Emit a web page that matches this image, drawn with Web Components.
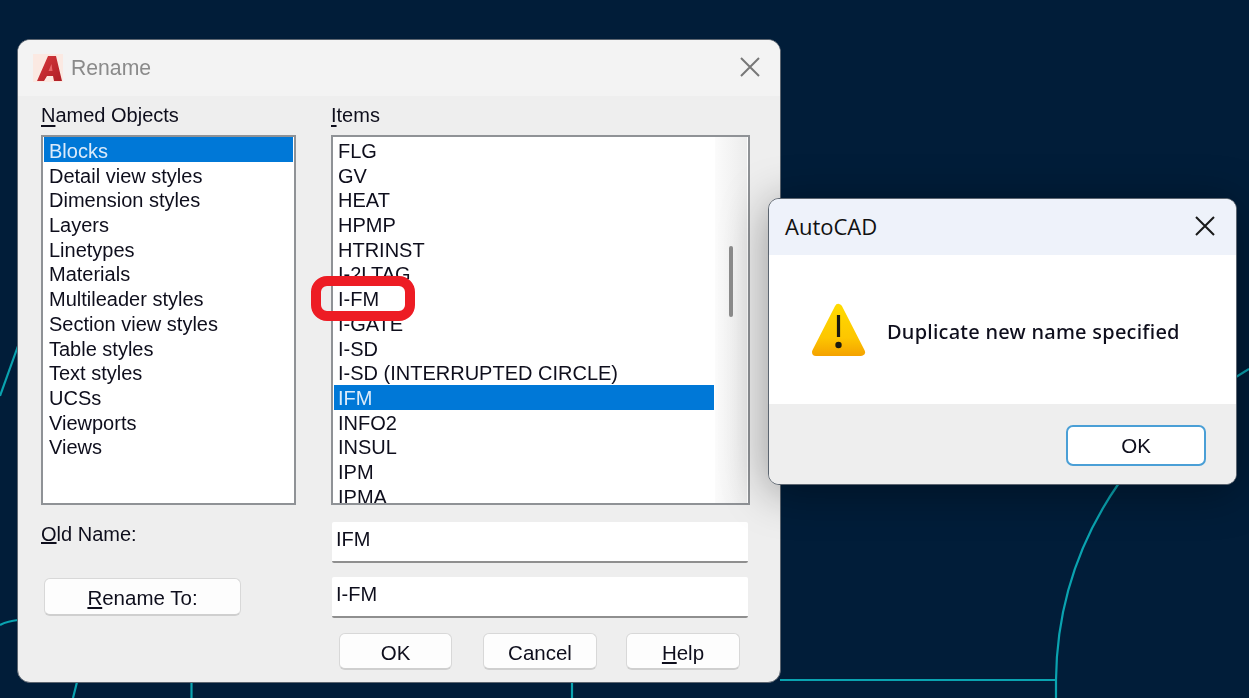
<!DOCTYPE html>
<html>
<head>
<meta charset="utf-8">
<title>Rename</title>
<style>
    html, body { margin: 0; height: 100%; background: #011d39; overflow: hidden; }
</style>
</head>
<body>
<cad-desktop>
    <rename-dialog></rename-dialog>
    <alert-dialog></alert-dialog>
</cad-desktop>

<script>
class CadDesktop extends HTMLElement {
    constructor() {
        super();
        this.attachShadow({mode: 'open'});
        this.shadowRoot.innerHTML = `
            <style>
                :host { display: block; position: relative; width: 1249px; height: 698px; overflow: hidden; background: #011d39; }
                svg { position: absolute; left: 0; top: 0; }
                path { fill: none; stroke: #0aa3b0; stroke-width: 2.200; }
            </style>
            <svg width="1249" height="698" viewBox="0 0 1249 698">
                <path d="M0 396 L18 346"/>
                <path d="M0 625 Q8 621 18 620"/>
                <path d="M77 682 L73 698"/>
                <path d="M191.500 682 V698"/>
                <path d="M572 682 V698"/>
                <path d="M780 680 H1056"/>
                <path d="M1119 483 Q1057 572 1056 680 V698"/>
                <path d="M1236 377 L1249 369"/>
            </svg>
            <slot></slot>
        `;
    }
}

class CloseIcon extends HTMLElement {
    constructor() {
        super();
        this.attachShadow({mode: 'open'});
        const color = this.getAttribute('color') || '#222';
        const width = this.getAttribute('stroke') || '2';
        this.shadowRoot.innerHTML = `
            <style>
                :host { display: block; width: 20px; height: 20px; }
                svg { display: block; }
            </style>
            <svg width="20" height="20" viewBox="0 0 20 20">
                <path d="M1 1 L19 19 M19 1 L1 19" fill="none" stroke="${color}" stroke-width="${width}"/>
            </svg>
        `;
    }
}

class WinButton extends HTMLElement {
    constructor() {
        super();
        this.attachShadow({mode: 'open'});
        this.shadowRoot.innerHTML = `
            <style>
                :host {
                    display: flex;
                    align-items: center;
                    justify-content: center;
                    box-sizing: border-box;
                    padding-top: 3px;
                    background: #fdfdfd;
                    border: 1px solid #d8d8d8;
                    border-bottom: 2px solid #cfcfcf;
                    border-radius: 6px;
                    color: #0e0e1c;
                    font: 20.500px "Liberation Sans", Arial, sans-serif;
                }
                :host([primary]) {
                    padding-top: 1px;
                    background: #fff;
                    border: 2px solid #4a9fd6;
                    border-radius: 7px;
                }
            </style>
            <slot></slot>
        `;
    }
}

class ListRow extends HTMLElement {
    constructor() {
        super();
        this.attachShadow({mode: 'open'});
        this.shadowRoot.innerHTML = `
            <style>
                :host {
                    display: block;
                    height: 24.700px;
                    line-height: var(--row-line, 27px);
                    padding-left: var(--row-pad, 5px);
                    white-space: nowrap;
                    color: #0e0e1c;
                }
                :host([selected]) { background: #0078d7; color: #dcebfa; }
            </style>
            <slot></slot>
        `;
    }
}

class ListBox extends HTMLElement {
    constructor() {
        super();
        this.attachShadow({mode: 'open'});
        this.shadowRoot.innerHTML = `
            <style>
                :host {
                    display: flex;
                    position: relative;
                    box-sizing: border-box;
                    height: 370px;
                    border: 2px solid #8f9296;
                    background: #fff;
                    overflow: hidden;
                    font: 20px "Liberation Sans", Arial, sans-serif;
                    --row-line: 29px;
                }
                :host([scroll]) { --row-line: 27px; --row-pad: 4px; }
                .rows { flex: 1; min-width: 0; padding: 0 1px; overflow: hidden; }
                :host([scroll]) .rows { padding-top: 1px; }
                .track { display: none; position: relative; width: 32px; margin-right: 1px; background: linear-gradient(90deg, #fbfbfb, #ececec); }
                :host([scroll]) .track { display: block; }
                .thumb { position: absolute; left: 14px; top: 109px; width: 4px; height: 71px; border-radius: 2px; background: #8c8c8c; }
            </style>
            <div class="rows"><slot></slot></div>
            <div class="track"><div class="thumb"></div></div>
        `;
    }
}

class NameField extends HTMLElement {
    constructor() {
        super();
        this.attachShadow({mode: 'open'});
        this.shadowRoot.innerHTML = `
            <style>
                :host {
                    display: block;
                    box-sizing: border-box;
                    height: 41px;
                    padding: 3px 0 0 4px;
                    background: #fff;
                    border-bottom: 2px solid #8f8f8f;
                    border-radius: 2px;
                    color: #0e0e1c;
                    font: 20px/28px "Liberation Sans", Arial, sans-serif;
                }
            </style>
            <slot></slot>
        `;
    }
}

class RenameDialog extends HTMLElement {
    constructor() {
        super();
        this.attachShadow({mode: 'open'});
        const named = ['Blocks', 'Detail view styles', 'Dimension styles', 'Layers', 'Linetypes', 'Materials',
            'Multileader styles', 'Section view styles', 'Table styles', 'Text styles', 'UCSs', 'Viewports', 'Views'];
        const items = ['FLG', 'GV', 'HEAT', 'HPMP', 'HTRINST', 'I-2LTAG', 'I-FM', 'I-GATE', 'I-SD',
            'I-SD (INTERRUPTED CIRCLE)', 'IFM', 'INFO2', 'INSUL', 'IPM', 'IPMA'];
        const rows = (list, selected) => list
            .map(t => `<list-row ${t === selected ? 'selected' : ''}>${t}</list-row>`)
            .join('');

        this.shadowRoot.innerHTML = `
            <style>
                :host {
                    display: block;
                    position: absolute;
                    left: 17px;
                    top: 39px;
                    width: 764px;
                    height: 644px;
                    box-sizing: border-box;
                    background: #eeeeee;
                    border: 1px solid #5c6570;
                    border-radius: 13px;
                    overflow: hidden;
                    font: 20px "Liberation Sans", Arial, sans-serif;
                    color: #0e0e1c;
                    filter: blur(.3px);
                }
                .title {
                    display: flex;
                    align-items: center;
                    height: 56px;
                    padding: 0 20px 0 15px;
                    background: #f3f3f3;
                    color: #8a8a8a;
                    font-size: 21.200px;
                }
                .title svg { display: block; flex: none; margin-right: 8px; }
                .title span { flex: 1; }
                .title close-icon { margin-top: -3px; }
                .body {
                    display: grid;
                    grid-template-columns: 255px 419px;
                    grid-template-rows: 32px 370px 72px 40px 37px;
                    column-gap: 35px;
                    padding: 7px 0 0 23px;
                }
                .label { line-height: 24px; }
                .label u { text-underline-offset: 3px; }
                .old { padding-top: 17px; line-height: 24px; }
                .field-1 { margin: 17px 2px 0 1px; }
                .field-2 { margin: 0 2px 0 1px; }
                .rename { margin: 1px 55px 1px 3px; height: 38px; }
                .buttons { display: flex; padding: 16px 0 0 8px; }
                .buttons win-button { height: 37px; width: 114px; }
                .buttons .ok { width: 113px; margin-right: 31px; }
                .buttons .cancel { margin-right: 29px; }
                .ring {
                    position: absolute;
                    left: 293px;
                    top: 236px;
                    width: 104px;
                    height: 45px;
                    box-sizing: border-box;
                    border: 10px solid #ed1c24;
                    border-radius: 16px;
                }
            </style>
            <div class="title">
                <svg width="30" height="28" viewBox="0 0 30 28">
                    <defs>
                        <linearGradient id="logo" x1="0" y1="0" x2="1" y2="1">
                            <stop offset="0" stop-color="#d8383c"/>
                            <stop offset="1" stop-color="#ae1f27"/>
                        </linearGradient>
                    </defs>
                    <rect width="30" height="28" fill="#fbe9e2"/>
                    <path fill="url(#logo)" d="M4 27 L15 2 H23 L29 27 H21 L20 22 H14 L11 27 Z"/>
                    <path fill="#e8686a" d="M15.500 17 H19.500 L18.500 10 Z"/>
                </svg>
                <span>Rename</span>
                <close-icon color="#777" stroke="2"></close-icon>
            </div>
            <div class="body">
                <div class="label"><u>N</u>amed Objects</div>
                <div class="label"><u>I</u>tems</div>
                <list-box>${rows(named, 'Blocks')}</list-box>
                <list-box scroll>${rows(items, 'IFM')}</list-box>
                <div class="old"><u>O</u>ld Name:</div>
                <name-field class="field-1">IFM</name-field>
                <win-button class="rename"><span><u>R</u>ename To:</span></win-button>
                <name-field class="field-2">I-FM</name-field>
                <div></div>
                <div class="buttons">
                    <win-button class="ok">OK</win-button>
                    <win-button class="cancel">Cancel</win-button>
                    <win-button><span><u>H</u>elp</span></win-button>
                </div>
            </div>
            <div class="ring"></div>
        `;
    }
}

class AlertDialog extends HTMLElement {
    constructor() {
        super();
        this.attachShadow({mode: 'open'});
        this.shadowRoot.innerHTML = `
            <style>
                :host {
                    display: flex;
                    flex-direction: column;
                    position: absolute;
                    left: 768px;
                    top: 198px;
                    width: 469px;
                    height: 287px;
                    box-sizing: border-box;
                    border: 1px solid #5c6570;
                    border-radius: 11px;
                    background: #fff;
                    box-shadow: 0 6px 46px rgba(0, 0, 0, .38);
                    color: #0e0e1c;
                    filter: blur(.3px);
                }
                .title {
                    display: flex;
                    align-items: center;
                    justify-content: space-between;
                    height: 56px;
                    box-sizing: border-box;
                    padding: 0 21px 2px 16px;
                    background: #eef2fa;
                    border-radius: 10px 10px 0 0;
                    font: 22px "Open Sans", "Noto Sans", sans-serif;
                    color: #111;
                }
                .content {
                    display: flex;
                    align-items: center;
                    height: 149px;
                    box-sizing: border-box;
                    padding-left: 42px;
                    font: 500 20px "Noto Sans", sans-serif;
                    letter-spacing: .25px;
                }
                .content svg { display: block; margin-right: 21px; flex: none; }
                .content span { padding-top: 3px; }
                .foot {
                    display: flex;
                    flex: 1;
                    align-items: center;
                    justify-content: flex-end;
                    padding: 2px 30px 0 0;
                    background: #eeeeee;
                    border-radius: 0 0 10px 10px;
                }
                .foot win-button { width: 140px; height: 41px; }
            </style>
            <div class="title">
                <span>AutoCAD</span>
                <close-icon color="#1a1a1a" stroke="2"></close-icon>
            </div>
            <div class="content">
                <svg width="55" height="55" viewBox="0 0 55 55">
                    <defs>
                        <linearGradient id="warn" gradientUnits="userSpaceOnUse" x1="0" y1="0" x2="0" y2="55">
                            <stop offset="0" stop-color="#ffdc00"/>
                            <stop offset=".65" stop-color="#fdc600"/>
                            <stop offset="1" stop-color="#f4a000"/>
                        </linearGradient>
                    </defs>
                    <path d="M27.500 6 L50 50 H5 Z" fill="url(#warn)" stroke="url(#warn)" stroke-width="8" stroke-linejoin="round"/>
                    <path d="M27.500 13 V35" stroke="#1a1a10" stroke-width="3.200"/>
                    <circle cx="27.500" cy="43" r="3.200" fill="#1a1a10"/>
                </svg>
                <span>Duplicate new name specified</span>
            </div>
            <div class="foot"><win-button primary>OK</win-button></div>
        `;
    }
}

customElements.define('cad-desktop', CadDesktop);
customElements.define('close-icon', CloseIcon);
customElements.define('win-button', WinButton);
customElements.define('list-row', ListRow);
customElements.define('list-box', ListBox);
customElements.define('name-field', NameField);
customElements.define('rename-dialog', RenameDialog);
customElements.define('alert-dialog', AlertDialog);
</script>
</body>
</html>
